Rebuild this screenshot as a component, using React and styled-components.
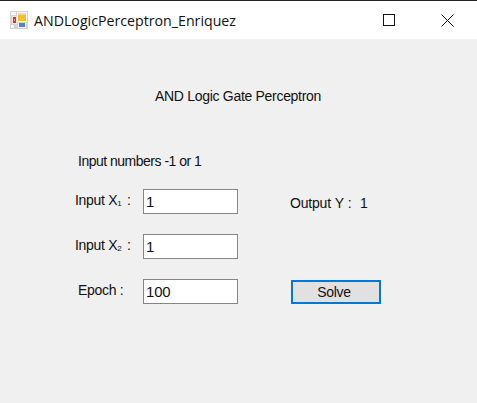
import React from 'react';
import styled, { createGlobalStyle } from 'styled-components';

const GlobalStyle = createGlobalStyle`
  html, body {
    margin: 0;
    padding: 0;
    background: #f0f0f0;
  }
`;

const AppIcon = () => (
  <svg width="18" height="18" viewBox="0 0 18 18">
    <rect x="0" y="0" width="18" height="18" fill="#d4d4d4" />
    <rect x="1" y="1" width="5" height="3" fill="#f4f4f4" />
    <rect x="1" y="14" width="3" height="3" fill="#f8f8f8" />
    <rect x="7" y="1" width="10" height="10" fill="#f6f6f6" />
    <rect x="8" y="2" width="8" height="8" fill="#f6bf2e" />
    <rect x="8" y="2" width="8" height="2" fill="#fbdc7a" />
    <rect x="2" y="5" width="5" height="8" fill="#f2e3e0" />
    <rect x="3" y="6" width="3" height="6" fill="#c8352c" />
    <rect x="4" y="8" width="1" height="2" fill="#eeb0a8" />
    <rect x="8" y="12" width="8" height="5" fill="#f2f4fa" />
    <rect x="9" y="12" width="6" height="4" fill="#4f82e0" />
  </svg>
);

const MaximizeIcon = () => (
  <svg width="12" height="12" viewBox="0 0 12 12">
    <rect x="0.5" y="0.5" width="11" height="11" fill="none" stroke="#111" />
  </svg>
);

const CloseIcon = () => (
  <svg width="13" height="13" viewBox="0 0 13 13">
    <path d="M0.5 0.5 L12.5 12.5 M12.5 0.5 L0.5 12.5" fill="none" stroke="#111" strokeWidth="1" />
  </svg>
);

const App = () => {
  return (
    <Window>
      <GlobalStyle />
      <TitleBar>
        <TitleIcon>
          <AppIcon />
        </TitleIcon>
        <WindowTitle>ANDLogicPerceptron_Enriquez</WindowTitle>
        <WindowButton>
          <MaximizeIcon />
        </WindowButton>
        <WindowButton>
          <CloseIcon />
        </WindowButton>
      </TitleBar>
      <FormBody>
        <Heading>AND Logic Gate Perceptron</Heading>
        <Hint>Input numbers -1 or 1</Hint>
        <Fields>
          <FieldLabel>Input X<Sub>1</Sub> :</FieldLabel>
          <TextBox defaultValue="1" />
          <OutputLabel>Output Y :&nbsp; 1</OutputLabel>
          <FieldLabel>Input X<Sub>2</Sub> :</FieldLabel>
          <TextBox defaultValue="1" />
          <span />
          <FieldLabel $indent>Epoch :</FieldLabel>
          <TextBox defaultValue="100" />
          <SolveButton>Solve</SolveButton>
        </Fields>
      </FormBody>
    </Window>
  );
};

const Window = styled.div`
  width: 477px;
  height: 403px;
  overflow: hidden;
  background-color: #f0f0f0;
  font-family: "Liberation Sans", Arial, sans-serif;
  color: #111;
`;

const TitleBar = styled.div`
  display: flex;
  align-items: center;
  height: 38px;
  box-sizing: content-box;
  border-top: 1px solid #222;
  background-color: #fff;
`;

const TitleIcon = styled.div`
  display: flex;
  margin-left: 10px;
  margin-right: 6px;
`;

const WindowTitle = styled.div`
  flex: 1;
  font-family: "Open Sans", "Liberation Sans", sans-serif;
  font-size: 14.2px;
  white-space: nowrap;
`;

const WindowButton = styled.div`
  display: flex;
  align-items: center;
  justify-content: center;
  width: 59px;
  height: 38px;
`;

const FormBody = styled.div`
  padding: 49px 0 0 75px;
  font-size: 14px;
  letter-spacing: -0.3px;
`;

const Heading = styled.div`
  margin-left: 80px;
  line-height: 16px;
`;

const Hint = styled.div`
  margin: 49px 0 0 3px;
  line-height: 16px;
  letter-spacing: -0.5px;
`;

const Fields = styled.div`
  display: grid;
  grid-template-columns: 68px 95px 143px;
  grid-auto-rows: 25px;
  row-gap: 20px;
  margin-top: 20px;
  align-items: center;
`;

const FieldLabel = styled.div`
  margin-left: ${(props) => (props.$indent ? '3px' : '0')};
  margin-top: ${(props) => (props.$indent ? '-3px' : '-4px')};
  white-space: nowrap;
`;

const Sub = styled.span`
  font-size: 8px;
  vertical-align: -1px;
  margin-right: 2px;
`;

const TextBox = styled.input`
  box-sizing: border-box;
  width: 95px;
  height: 25px;
  padding: 0 2px;
  border: 1px solid #858585;
  outline: none;
  border-radius: 0;
  background-color: #fff;
  font-family: "Liberation Sans", Arial, sans-serif;
  font-size: 15px;
  letter-spacing: -0.2px;
  color: #111;
`;

const OutputLabel = styled.div`
  margin-left: 52px;
  margin-top: 2px;
  white-space: nowrap;
  word-spacing: 0.5px;
  letter-spacing: -0.2px;
`;

const SolveButton = styled.button`
  box-sizing: border-box;
  align-self: end;
  width: 90px;
  height: 24px;
  margin-left: 53px;
  padding: 0 4px 0 0;
  border: 2px solid #0078d7;
  border-radius: 0;
  background-color: #e1e1e1;
  font-family: "Liberation Sans", Arial, sans-serif;
  font-size: 14px;
  letter-spacing: -0.3px;
  color: #111;
`;

export default App;
